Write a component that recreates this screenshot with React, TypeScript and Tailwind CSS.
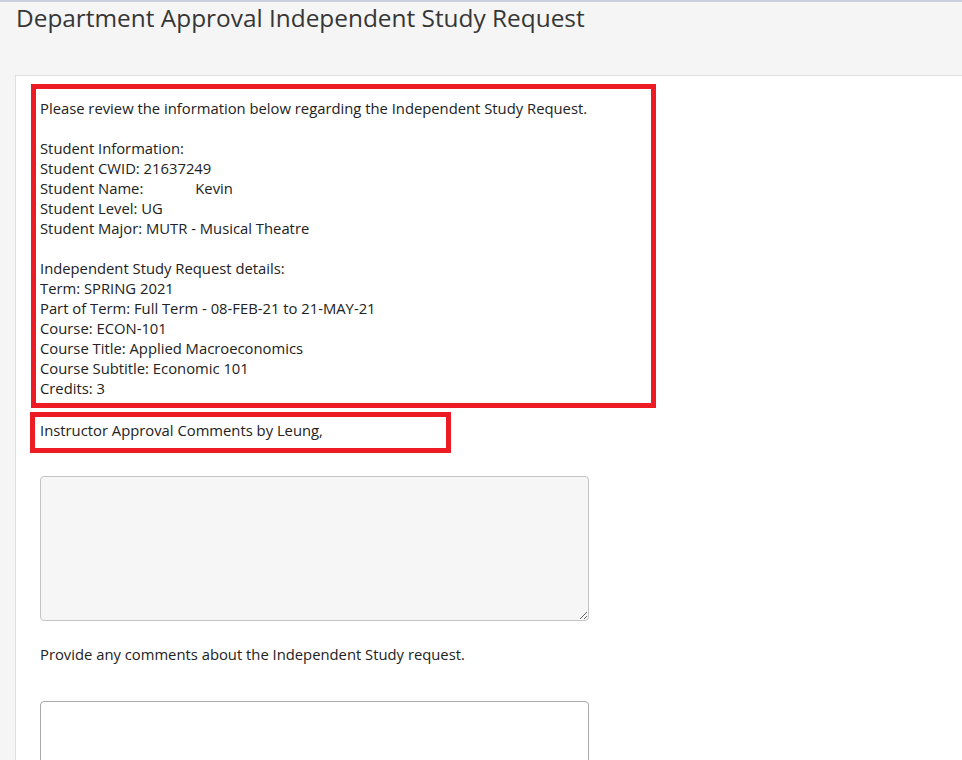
import React from "react";

const details = [
  "Independent Study Request details:",
  "Term: SPRING 2021",
  "Part of Term: Full Term - 08-FEB-21 to 21-MAY-21",
  "Course: ECON-101",
  "Course Title: Applied Macroeconomics",
  "Course Subtitle: Economic 101",
  "Credits: 3",
];

export default function App() {
  return (
    <div
      className="min-h-screen bg-[#f5f5f5] border-t-2 border-[#c9cfdb] text-[#222222]"
      style={{ fontFamily: '"Open Sans", "Liberation Sans", sans-serif' }}
    >
      <div className="h-[73px] pl-[16px]">
        <h1 className="text-[24.4px] leading-[32px] font-normal text-[#363636]">
          Department Approval Independent Study Request
        </h1>
      </div>

      <div className="ml-[15px] bg-white border-l border-t border-[#dedede] pl-[15px] pt-[8px] pb-10 text-[14.8px] leading-[20px]">
        <div className="w-[625px] border-[5px] border-[#ed1c24] pt-[9px] pb-[5px] pl-[4px]">
          <p>Please review the information below regarding the Independent Study Request.</p>
          <div className="h-[20px]" />
          <p>Student Information:</p>
          <p>Student CWID: 21637249</p>
          <p>
            Student Name:<span className="ml-[52px]">Kevin</span>
          </p>
          <p>Student Level: UG</p>
          <p>Student Major: MUTR - Musical Theatre</p>
          <div className="h-[20px]" />
          {details.map((line) => (
            <p key={line}>{line}</p>
          ))}
        </div>

        <div className="-ml-px mt-[4px] w-[421px] border-[5px] border-[#ed1c24] pt-[3px] pb-[8px] pl-[5px]">
          <p>Instructor Approval Comments by Leung,</p>
        </div>

        <textarea
          readOnly
          className="block ml-[9px] mt-[23px] w-[549px] h-[145px] bg-[#f6f6f6] border border-[#c4c4c4] rounded-[4px] outline-none"
        />

        <p className="ml-[9px] mt-[23px]">Provide any comments about the Independent Study request.</p>

        <textarea className="block ml-[9px] mt-[37px] w-[549px] h-[145px] bg-white border border-[#a9a9a9] rounded-[4px] outline-none" />
      </div>
    </div>
  );
}
